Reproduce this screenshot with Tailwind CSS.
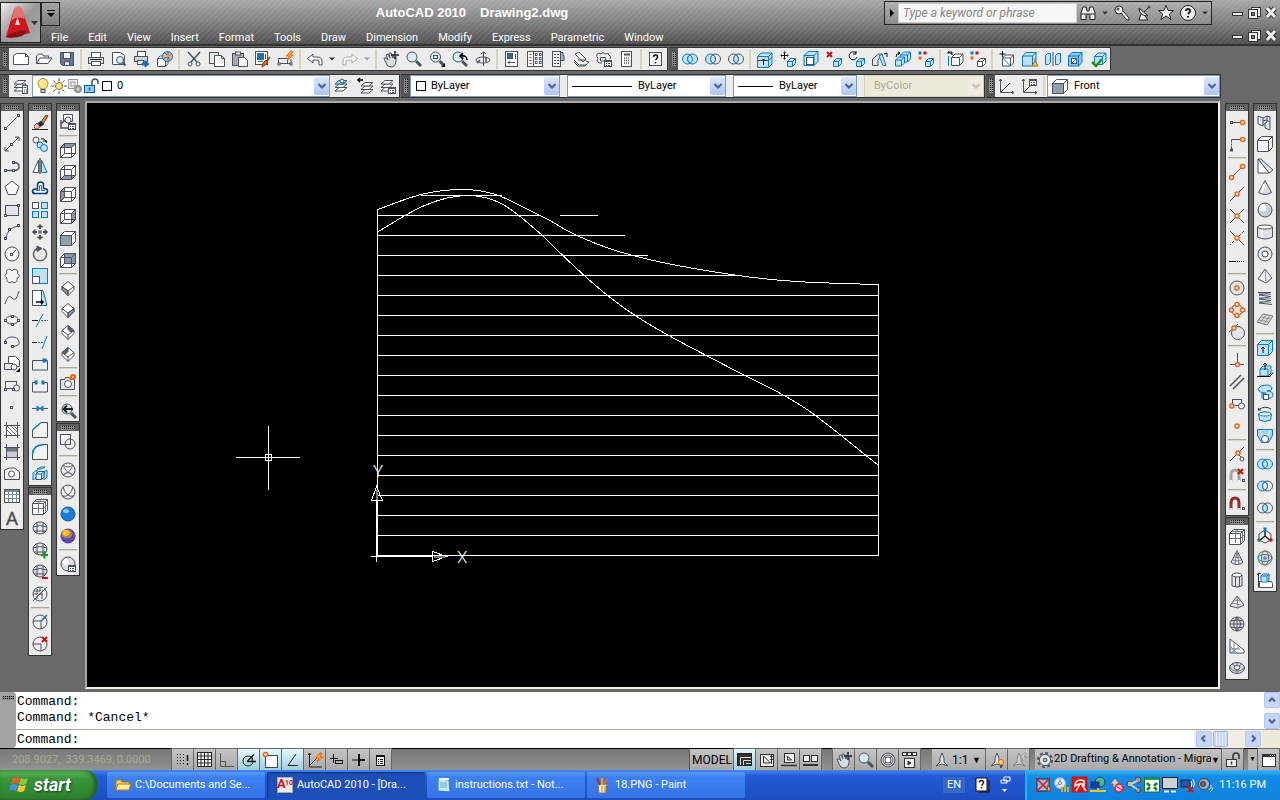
<!DOCTYPE html>
<html lang="en">
<head>
  <meta charset="UTF-8">
  <meta name="viewport" content="width=device-width, initial-scale=1.0">
  <title>AutoCAD 2010 - Drawing2.dwg</title>
  <script src="https://cdn.jsdelivr.net/npm/@tailwindcss/browser@4"></script>
</head>
<body class="h-screen flex flex-col overflow-hidden bg-[#696969] font-[Roboto,'Liberation_Sans',sans-serif] text-[11px] leading-4 text-black">

  <!-- Title bar and menus -->
  <header class="flex shrink-0 h-[46px] border-b-2 border-[#333] bg-[repeating-linear-gradient(135deg,#ffffff0c_0_2px,transparent_2px_4px),linear-gradient(#a8a8a8,#858585_45%,#505050)]">
    <button aria-label="Application menu" class="w-[41px] h-[41px] mt-0.5 flex items-center justify-center border border-[#222] bg-linear-to-br from-[#eee] via-[#999] to-[#aaa]">
      <svg class="w-9 h-10" viewBox="0 0 36 40">
        <path d="M3 34L11 6Q15 1 19 6L27 30L19 32L17 28L10 29L8 35Z" fill="#cf151d"/>
        <path d="M12 22L14.500 14L17 22Z" fill="#f6d5d0"/>
        <path d="M11 6Q15 1 19 6L22 16Q12 12 8 19Z" fill="#fff" opacity=".4"/>
        <path d="M3 34Q12 26 25 28L19 33Q10 36 3 34Z" fill="#8d0b10"/>
        <path d="M28 18h7l-3.500 4z" fill="#2b2f3a"/>
      </svg>
    </button>
    <div class="flex-1 flex flex-col">
      <div class="flex h-[26px]">
        <button aria-label="Quick access" class="w-[19px] h-[24px] mt-0.5 flex items-center justify-center border border-[#222]">
          <svg class="size-2" viewBox="0 0 8 8"><path d="M0 0h8v1H0zM0 3h8L4 7z"/></svg>
        </button>
        <h1 class="flex-1 flex items-center justify-center gap-3.5 font-['Liberation_Sans',sans-serif] text-[13px] font-bold text-white"><span>AutoCAD 2010</span><span>Drawing2.dwg</span></h1>
        <div class="flex items-center h-6 mt-px border border-[#222] bg-white/10">
          <button aria-label="Collapse search" class="w-[13px] flex justify-center"><svg class="w-1 h-2" viewBox="0 0 4 8"><path d="M0 0l4 4-4 4z"/></svg></button>
          <input aria-label="Search" placeholder="Type a keyword or phrase" class="w-[179px] h-5 px-1 border border-[#ccc] bg-[#f6f6f6] text-xs italic placeholder:text-[#888]">
          <div data-icons="find drop key satellite star help drop" data-size="info" class="flex items-center"></div>
        </div>
        <div data-icons="minimize restore close" data-size="win" class="flex items-center w-[68px] pl-4"></div>
      </div>
      <div class="flex h-[18px] pt-0.5 items-center">
        <nav class="flex-1 flex items-center gap-5 pl-2.5 pt-1 text-white">
          <a href="#">File</a><a href="#">Edit</a><a href="#">View</a><a href="#">Insert</a><a href="#">Format</a><a href="#">Tools</a><a href="#">Draw</a><a href="#">Dimension</a><a href="#">Modify</a><a href="#">Express</a><a href="#">Parametric</a><a href="#">Window</a>
        </nav>
        <div data-icons="minimize restore close" data-size="win" class="flex items-center w-[68px] pl-4"></div>
      </div>
    </div>
  </header>

  <!-- Standard and solid editing toolbars -->
  <div class="flex shrink-0 gap-px h-7 pt-px pb-[3px]">
    <div data-grip="h" data-icons="new open save | plot preview publish dwf | cut copy paste match block | undo drop redo dropoff | pan zoom zoomWindow zoomPrevious orbit | properties designCenter toolPalettes sheetSet markup calculator | helpBox" data-size="h" class="flex items-center border-y border-r border-[#333] bg-[#ececec]"></div>
    <div data-grip="h" data-icons="union subtract intersect | extrudeFace moveFace offsetFace deleteFace rotateFace taperFace copyFace colorFace | copyEdge colorEdge | imprint clean separate shell check" data-size="h" class="flex items-center border-y border-r border-[#333] bg-[#ececec]"></div>
  </div>

  <!-- Layers, properties and view toolbars -->
  <div class="flex shrink-0 gap-px h-[27px] pb-[3px]">
    <div data-grip="h" class="flex items-center border-y border-r border-[#333] bg-[#ececec]">
      <div data-icons="layers" data-size="h" class="flex"></div>
      <div class="flex items-center w-[298px] h-[22px] border border-[#7f9db9] bg-white">
        <div data-icons="bulb sun freeze unlock swatch" data-size="tiny" class="flex pl-0.5"></div>
        <select aria-label="Layer" class="flex-1 min-w-0 pl-0.5 appearance-none outline-0"><option>0</option></select>
        <span data-arrow></span>
      </div>
      <div data-icons="layerCurrent layerPrevious layerStates" data-size="h" class="flex"></div>
    </div>
    <div data-grip="h" class="flex items-center border-y border-r border-[#333] bg-[#ececec]">
      <div class="flex items-center gap-[7px]">
        <div class="flex items-center w-[150px] h-[22px] border border-[#7f9db9] bg-white">
          <div data-icons="swatch" data-size="tiny" class="flex pl-0.5"></div>
          <select aria-label="Color" class="flex-1 min-w-0 pl-0.5 appearance-none outline-0"><option>ByLayer</option></select>
          <span data-arrow></span>
        </div>
        <div class="flex items-center w-[159px] h-[22px] border border-[#7f9db9] bg-white">
          <i class="w-[60px] h-px ml-1 mr-1.5 bg-black"></i>
          <select aria-label="Linetype" class="flex-1 min-w-0 appearance-none outline-0"><option>ByLayer</option></select>
          <span data-arrow></span>
        </div>
        <div class="flex items-center w-[124px] h-[22px] border border-[#7f9db9] bg-white">
          <i class="w-[35px] h-px ml-1 mr-1.5 bg-black"></i>
          <select aria-label="Lineweight" class="flex-1 min-w-0 appearance-none outline-0"><option>ByLayer</option></select>
          <span data-arrow></span>
        </div>
        <div class="flex items-center w-[120px] h-[22px] border border-[#d5d2c0] bg-[#ece9d8] text-[#aca899]">
          <select aria-label="Plot style" disabled class="flex-1 min-w-0 pl-[9px] appearance-none"><option>ByColor</option></select>
          <span data-arrow="off"></span>
        </div>
      </div>
    </div>
    <div data-grip="h" class="flex items-center border-y border-r border-[#333] bg-[#ececec]">
      <div data-icons="ucs ucsNamed |" data-size="h" class="flex items-center"></div>
      <div class="flex items-center w-[173px] h-[22px] border border-[#7f9db9] bg-white">
        <div data-icons="viewFront" data-size="tiny" class="flex pl-1 pr-1.5"></div>
        <select aria-label="View" class="flex-1 min-w-0 appearance-none outline-0"><option>Front</option></select>
        <span data-arrow></span>
      </div>
    </div>
  </div>

  <!-- Workspace -->
  <main class="flex flex-1 min-h-0">
    <div class="flex gap-1 pt-0.5 mr-[5px] items-start">
      <div data-grip="v" data-icons="line xline polyline polygon rectangle arc circle revcloud spline ellipse ellipseArc insertBlock makeBlock point hatch gradient region table text" data-size="v" class="w-6 border border-[#333] bg-[#ececec]"></div>
      <div class="flex flex-col gap-px">
        <div data-grip="v" data-icons="erase copyObject mirror offset array move rotate scale stretch trim extend breakPoint breakLine join chamfer fillet explode" data-size="v" class="w-6 border border-[#333] bg-[#ececec]"></div>
        <div data-grip="v" data-icons="meshBox smooth smoothMore smoothLess refine - crease uncrease" data-size="v" class="w-6 border border-[#333] bg-[#ececec]"></div>
      </div>
      <div class="flex flex-col gap-px">
        <div data-grip="v" data-icons="namedViews - viewTop viewBottom viewLeft viewRight viewFront viewBack - viewSW viewSE viewNE viewNW - camera - previousView" data-size="v" class="w-6 border border-[#333] bg-[#ececec]"></div>
        <div data-grip="v" data-icons="wire2d - wire3d hidden realistic conceptual - visualStyles" data-size="v" class="w-6 border border-[#333] bg-[#ececec]"></div>
      </div>
    </div>

    <section aria-label="Drawing" class="flex-1 min-w-0 mb-[3px] border-2 border-t-[#aaa] border-l-[#a9a799] border-r-[#f4f2e4] border-b-[#f4f2e4] bg-black">
      <svg class="w-full h-full" viewBox="87 103 1131 584" fill="none" stroke="#fff" shape-rendering="crispEdges">
        <g id="strata"></g>
        <path d="M377.500 209V555.500H878.500V284"/>
        <path d="M377.500 209.500C400 202 422 189.500 463 189.500C498 189.500 515 204 540 215.500C555 222 560 228 578 236C600 246 615 251 633 255.500C665 264 700 270 735 275C780 282 820 283 878 284.500"/>
        <path d="M377.500 232C400 219 430 196 468 195.500C502 195.500 520 217 542 235C560 253 590 282 612 299C640 321 670 337 740 373C775 390 800 403 820 419C840 434 855 447 878 465"/>
        <!-- UCS icon -->
        <path d="M371 556.500H382M376.500 551V562"/>
        <path d="M377 556V500M377 556H432" stroke-width="2"/>
        <path d="M376.500 486.500L371.500 500.500H382.500ZM432.500 551.500V561.500L446.500 556.500Z"/>
        <path d="M376.500 490V500M434 556.500H445" stroke="#777" stroke-width="2"/>
        <g class="font-light text-[17px]" stroke="none" fill="#fff"><text x="457" y="563">X</text><text x="373" y="477">Y</text></g>
        <!-- Cursor -->
        <path d="M236 457.500H300M268.500 426V490M265.500 454.500h6v6h-6z"/>
      </svg>
    </section>

    <div class="flex gap-1 pt-0.5 ml-[5px] mr-[3px] items-start">
      <div class="flex flex-col gap-px">
        <div data-grip="v" data-icons="trackPoint snapFrom - endpoint midpoint intersection apparent extension - center quadrant tangent - perpendicular parallel insertSnap node - nearest snapNone - snapSettings" data-size="v" class="w-6 border border-[#333] bg-[#ececec]"></div>
        <div data-grip="v" data-icons="meshBox meshCone meshCylinder meshPyramid meshSphere meshWedge meshTorus" data-size="v" class="w-6 border border-[#333] bg-[#ececec]"></div>
      </div>
      <div data-grip="v" data-icons="polysolid box wedge cone sphere cylinder torus pyramid helix planar - extrude pressPull sweep revolve loft - union subtract intersect - move3d rotate3d align3d" data-size="v" class="w-6 border border-[#333] bg-[#ececec]"></div>
    </div>
  </main>

  <!-- Command window -->
  <section aria-label="Command line" class="flex shrink-0 h-14 bg-white font-['Liberation_Mono',monospace] text-[13px]">
    <div class="w-4 pt-1 pl-0.5 rounded-r bg-[#a3a3a3]"><i class="block w-3 h-1 bg-[conic-gradient(#111_25%,#888_0)] bg-size-[2px_2px]"></i></div>
    <div class="flex-1 flex flex-col">
      <div class="flex h-[38px] border-b border-[#aca899]">
        <div class="flex-1 pl-px pt-0.5"><p>Command:</p><p>Command:&nbsp;*Cancel*</p></div>
        <div class="flex flex-col justify-between w-4 bg-[#f4f4f0]">
          <button data-scroll="M1 5l3-3 3 3" aria-label="Scroll up"></button>
          <button data-scroll="M1 2l3 3 3-3" aria-label="Scroll down"></button>
        </div>
      </div>
      <div class="flex flex-1 items-center">
        <label for="command" class="pl-px pt-0.5">Command:</label>
        <input id="command" class="flex-1 min-w-0 pl-2 outline-0">
        <div class="flex items-center h-full pl-0.5 gap-px bg-[#f0eee4]">
          <button data-scroll="M5 0L2 3l3 3" aria-label="Scroll left"></button>
          <span class="w-[15px] h-4 rounded-xs border border-[#9cb4e8] bg-[repeating-linear-gradient(90deg,#c5d5fc_0_2px,#eef3ff_2px_3px)]"></span>
          <span class="w-[15px]"></span>
          <button data-scroll="M3 0l3 3-3 3" aria-label="Scroll right"></button>
          <span class="w-[18px] h-full bg-[#ece9d8]"></span>
        </div>
      </div>
    </div>
  </section>

  <!-- Status bar -->
  <footer class="flex shrink-0 items-stretch h-[22px] border-t border-black bg-linear-to-b from-[#787878] to-[#929292] text-xs">
    <output class="w-[172px] pl-3 pt-1 text-[11px] text-[#aaa694]">208.9027,&nbsp; 339.3469, 0.0000</output>
    <div data-icons="snap grid ortho polar* osnap* otrack* ducs dyn lwt qp" data-size="s" class="flex gap-px border-r border-[#555]"></div>
    <div class="flex-1"></div>
    <button class="w-[45px] border-l border-[#555] bg-linear-to-b from-[#c4c4c4] to-[#aaa]">MODEL</button>
    <div data-icons="model* layout quickLayout quickDrawings" data-size="s" class="flex gap-px"></div>
    <div class="w-3"></div>
    <div data-icons="pan zoom wheel motion" data-size="s" class="flex gap-px"></div>
    <div class="w-3"></div>
    <div class="flex items-center w-[53px] bg-linear-to-b from-[#c4c4c4] to-[#aaa]">
      <span data-icons="annotation" data-size="tiny" class="pl-0.5"></span>
      <select aria-label="Annotation scale" class="appearance-none w-[20px] ml-0.5 outline-0"><option>1:1</option></select><span class="text-[9px]">▼</span>
    </div>
    <div data-icons="annoVisible annoAuto" data-size="s" class="flex gap-px ml-px"></div>
    <div class="w-[6px]"></div>
    <div class="flex items-center w-[186px] bg-linear-to-b from-[#c4c4c4] to-[#aaa]">
      <span data-icons="gear" data-size="tiny" class="pl-0.5 pr-px"></span>
      <select aria-label="Workspace" class="appearance-none flex-1 min-w-0 text-[11px] outline-0"><option>2D Drafting &amp; Annotation - Migra</option></select><span class="w-2.5 text-[9px]">▼</span>
    </div>
    <div data-icons="lock" data-size="s" class="flex ml-px"></div>
    <button aria-label="Status menu" class="w-[9px] ml-[5px] text-[7px] bg-[#b8b8b8]">▼</button>
    <div data-icons="cleanScreen" data-size="s" class="flex ml-px pr-px bg-[#b8b8b8]"></div>
  </footer>

  <!-- Taskbar -->
  <div class="flex shrink-0 h-[30px] bg-linear-to-b from-[#4a87ee] via-[#2359d6] via-20% to-[#1d4ec0] text-white">
    <button class="flex items-center gap-1 w-[97px] pl-2.5 rounded-r-xl bg-linear-to-b from-[#5fb85b] via-[#38963a] via-30% to-[#2f8030] shadow-[inset_-3px_0_4px_#1f5f22] text-lg font-bold italic [text-shadow:1px_1px_2px_#1a3d1a]">
      <svg class="size-5" viewBox="0 0 20 20"><path d="M3 3q4-2 7 0L8 9Q5 7 1 9z" fill="#f0592b"/><path d="M11 3q3 2 7 0l-2 6q-4 2-7 0z" fill="#8cc83c"/><path d="M1 10q4-2 7 0l-2 6q-3-2-7 0z" fill="#3d8ff0"/><path d="M9 10q3 2 7 0l-2 6q-4 2-7 0z" fill="#fdc82e"/></svg>
      start
    </button>
    <div class="flex items-center gap-0.5 pl-2.5">
      <button class="flex items-center gap-1 w-[158px] h-[26px] pl-2 rounded-xs bg-linear-to-b from-[#5a9af8] via-[#3c81f3] via-20% to-[#3573e6]"><span data-icons="folder" data-size="plain"></span>C:\Documents and Se...</button>
      <button class="flex items-center gap-1 w-[158px] h-[26px] pl-2.5 rounded-xs bg-[#1c4fb8] shadow-[inset_1px_1px_2px_#0d327f]"><span data-icons="acad" data-size="plain"></span>AutoCAD 2010 - [Dra...</button>
      <button class="flex items-center gap-1 w-[158px] h-[26px] pl-2 rounded-xs bg-linear-to-b from-[#5a9af8] via-[#3c81f3] via-20% to-[#3573e6]"><span data-icons="notepad" data-size="plain"></span>instructions.txt - Not...</button>
      <button class="flex items-center gap-1 w-[158px] h-[26px] pl-2 rounded-xs bg-linear-to-b from-[#5a9af8] via-[#3c81f3] via-20% to-[#3573e6]"><span data-icons="paint" data-size="plain"></span>18.PNG - Paint</button>
    </div>
    <div class="flex-1"></div>
    <div class="flex items-center gap-2.5 pr-3">
      <button class="px-1 bg-[#316ac5]">EN</button>
      <span data-icons="langHelp langRestore" data-size="plain" class="flex gap-1.5"></span>
    </div>
    <div class="flex items-center w-[255px] pl-[9px] border-l-2 border-[#1bb8f5] bg-linear-to-b from-[#3fb4f6] via-[#118ee8] via-20% to-[#0f80db]">
      <div data-icons="trayBlocked trayDisc trayAvira trayNet trayEject trayShare trayExpand trayScreen trayWifi traySound" data-size="plain" class="flex gap-0.5 flex-1"></div>
      <time class="pr-3.5">11:16 PM</time>
    </div>
  </div>

  <script>
    const INK = '#4b525e', BLUE = '#0a78cc', SKY = '#bfe2f6', ORG = '#f2600c', RED = '#cc1111';
    const p = (d, s = INK, f = 'none', w = 1) => `<path d="${d}" stroke="${s}" fill="${f}" stroke-width="${w}"/>`;
    const c = (x, y, r, s = INK, f = 'none', w = 1) => `<circle cx="${x}" cy="${y}" r="${r}" stroke="${s}" fill="${f}" stroke-width="${w}"/>`;
    const e = (x, y, a, b, s = INK, f = 'none') => `<ellipse cx="${x}" cy="${y}" rx="${a}" ry="${b}" stroke="${s}" fill="${f}"/>`;
    const r = (x, y, w, h, s = INK, f = 'none') => `<rect x="${x}" y="${y}" width="${w}" height="${h}" stroke="${s}" fill="${f}"/>`;
    const cube = (x, y, n, d, s = INK, f = '#fff') => p(`M${x} ${y + d}l${d} ${-d}h${n}v${n}l${-d} ${d}h${-n}z`, s, f) + p(`M${x} ${y + d}h${n}v${n}M${x + n} ${y + d}l${d} ${-d}`, s);
    const dot = (x, y) => r(x - 1, y - 1, 2, 2, INK, '#fff');
    const osn = (x, y) => c(x, y, 2, ORG, '#fff', 1.5);
    const ball = (f = '#eee') => c(8, 8, 7, INK, f);
    const pal = (x, y) => r(x + .5, y + .5, 7, 6, INK, '#fff') + p(`M${x + .5} ${y + 1}h7`, INK, 'none', 2) + p(`M${x + 2} ${y + 3.5}h1m1 0h2M${x + 2} ${y + 5.5}h1m1 0h2`);
    const lay = (n = 3, s = INK) => { let o = ''; for (let i = n; i--;) o += p(`M1 ${6 + i * 3.5}l4-3.500h8l-4 3.500z`, s, '#fff'); return o; };
    const mov = (x, y) => p(`M${x - 4} ${y}h8M${x} ${y - 4}v8M${x - 3} ${y - 1}v2M${x + 3} ${y - 1}v2M${x - 1} ${y - 3}h2M${x - 1} ${y + 3}h2`, '#111');
    const cross = (x, y) => p(`M${x} ${y}l5 5m0-5l-5 5`, RED, 'none', 2);
    const dots = r(1, 1, 2, 2, BLUE, BLUE) + r(6, 1, 2, 2, RED, RED) + r(1, 6, 2, 2, ORG, ORG);
    const mag = (x, y) => c(x, y, 5, INK, '#d9ebf3') + p(`M${x + 4} ${y + 4}l5 5`, INK, 'none', 3);
    const iso = a => p('M8 1.500l6 5v3l-6 6-6-6v-3z', INK, '#fff') + a + p('M2 6.500l6 4.500 6-4.500M8 11v4.500');
    const frame = 'M.5 5.500l4-4h11v10l-4 4h-11z';
    const view = a => p(frame, INK, '#fff') + p(a, INK, '#8b95a3') + p('M.5 5.500h11v10M11.500 5.500l4-4M4.500 1.500v10h11M.5 15.500l4-4');
    const hand = p('M1 7q3-1 4 2l-2-5 2-1 2 4-1-5 2 0 2 5 1-4 2 1v7q-1 5-5 5-4 0-5-4z', INK, '#d7dce0');
    const compass = p('M8 1l2 5v4l4 4-6-2-6 2 4-4V6z', INK, '#e4e4e4');
    const globe = ball('#e3e5e8') + p('M1 8h14M2 5q6-2 12 0M2 11q6 2 12 0M8 1v14M8 1q-7 7 0 14M8 1q7 7 0 14');
    const face = (x, y) => cube(x + .5, y + .5, 5, 3, BLUE, SKY);
    const magnet = s => p('M2 14V7q0-5 4-5t4 5v7', s, 'none', 3) + p('M.5 13.500h3M8.500 13.500h3', '#eee', 'none', 3) + r(13.5, 11.500, 2, 2);
    const venn = (a, b, m) => c(5.5, 8, 5, a ? BLUE : INK, a ? SKY : 'none') + c(10.5, 8, 5, b ? BLUE : INK, b ? SKY : 'none') + (a && !b ? p('M8 3.800q-5 4 0 8.500 5-4 0-8.500z', BLUE, '#ececec') : '') + (m ? p('M8 3.800q-5 4 0 8.500 5-4 0-8.500z', BLUE, SKY) : '');

    const icons = {
      minimize: r(3.5, 7.500, 10, 3, '#333', '#eee'),
      restore: r(5.5, 2.500, 9, 9, '#333', '#eee') + r(2.5, 4.500, 9, 9, '#333', '#eee') + r(5.5, 7.500, 3, 3, '#333', '#777'),
      close: p('M4 3l8 9M12 3l-8 9', '#333', 'none', 5) + p('M4 3l8 9M12 3l-8 9', '#eee', 'none', 3),
      find: p('M1 14.500V8l2-6h3l1 4h2l1-4h3l2 6v6.500h-5V9H6v5.500z', '#222', '#eee') + p('M1 9h5M10 9h5', '#222'),
      drop: p('M5 6.500h6l-3 3z', 'none', '#333'),
      dropoff: p('M5 6.500h6l-3 3z', 'none', '#999'),
      key: c(5, 5, 4, '#222', '#eee') + p('M7 8l6 7h2v-2L9 6', '#222', '#eee') + c(4, 4, 1, '#222'),
      satellite: p('M3 3q0 8 9 8zM5 9l-2 6h9l-3-4M8 7l5-5', '#222', '#eee') + c(13, 2, 1, '#222', '#fff'),
      star: p('M8 .5l2.200 5h5.300l-4.200 3.500 1.700 5.500-5-3.500-5 3.500 1.700-5.500L.5 5.500h5.300z', '#222', '#eee'),
      help: c(8, 8, 7.5, '#222', '#eee') + p('M6 6q0-2 2-2t2 2q0 1-2 3M8 11v1.500', '#222', 'none', 2),
      new: p('M.5 13.500v-9l3-2h9l3 3v8z', INK, '#fff') + p('M12.500 2.500v3h3'),
      open: p('M.5 12.500V5l2-2h4l1 2h5v2', INK, '#eee') + p('M.5 12.500L4 7h12l-4 5.500z', INK, '#f4f6f8'),
      save: p('M1.500 1.500h13v13h-11l-2-2z', INK, '#68788c') + r(4.5, 1.5, 7, 6, INK, '#f2f4f6') + r(5.5, 10.5, 5, 4, INK, '#dde'),
      plot: r(3.5, 1.5, 9, 5, INK, '#fff') + r(.5, 6.500, 15, 6, INK, '#dcdfe3') + r(3.5, 10.5, 9, 4, INK, '#fff') + p('M2 8.500h12', '#222'),
      preview: p('M1.500 1.500h8l4 3v9h-12z', INK, '#fff') + c(9, 9, 3.5, INK, '#d9ebf3') + p('M11.500 11.500l3 3', INK, 'none', 2),
      publish: r(3.5, .5, 8, 5, INK, '#fff') + r(.5, 5.500, 13, 5, INK, '#cfd3d8') + r(3.5, 9.500, 6, 4, INK, '#fff') + p('M8 12h3V9.500l4 3.500-4 3v-2H8z', BLUE, '#1662b8'),
      dwf: cube(.5, 5, 8, 2.5) + c(10.5, 5.500, 5, '#1a6ac0', '#7ad2e8') + p('M8 2l3 3 3-1M7 7l4-1 2 3M11 1v9', '#e8401c') + p('M6.500 5h8', '#fbd22e'),
      cut: p('M2 1l9 10M14 1L5 11', INK, 'none', 1.5) + c(4, 13, 2) + c(12, 13, 2),
      copy: r(.5, 1.500, 9, 11, INK, '#e8ebee') + p('M5.500 4.500h7l3 3v8h-10z', INK, '#fff') + p('M12.500 4.500v3h3'),
      paste: r(.5, 2.500, 11, 12, INK, '#a7a9ac') + r(3.5, 1, 5, 3, INK, '#eee') + p('M6.500 6.500h6l3 3v6h-9z', INK, '#fff'),
      match: r(.5, .5, 12, 13, INK, '#fff') + r(2.5, 2.5, 6, 6, BLUE, '#1d6ba8') + p('M10.500 3v5M3 10.500h5') + p('M15 6l-4 5', '#8a5a2a', 'none', 2) + p('M11 9l2 3-6 4 1-4z', '#8c3a0c', '#d9702a'),
      block: p('M.5 7.500h9v5h-9zM4 12.500h9M13 8v5') + dot(1, 13) + dot(13, 13) + p('M13 0L8 5h3l-2 5 6-6h-3l3-3z', ORG, '#ffb02c'),
      undo: p('M6 3v3h4q5 0 5 4v4h-3v-3q0-2-2-2H6v3L.5 7.500z', INK, '#fff'),
      redo: p('M10 3v3H6Q1 6 1 10v4h3v-3q0-2 2-2h4v3l5.500-4.500z', '#a8a8a8', '#fff'),
      pan: hand + mov(12, 4),
      zoom: mag(6, 6),
      zoomWindow: mag(6.5, 6) + r(4.5, 4.500, 4, 3) + p('M16 12v4h-4z', 'none', '#000'),
      zoomPrevious: mag(6, 6) + p('M15 9q0-5-6-4M11 2L8 5l3 3', '#000', 'none', 1.5),
      orbit: p('M8.500 1v14M6 3l2.500-2L11 3') + e(8, 9, 7, 3) + p('M5 9l-3 3M11 6v5', INK, 'none', 1.5),
      properties: r(1.5, .5, 12, 15, INK, '#fff') + r(3.5, 2.5, 5, 5, INK, '#2d6ca0') + p('M11.500 3v5M6 9.500l-2 2 2 2M4 11.500h7', INK),
      designCenter: r(.5, .5, 15, 15, INK, '#fff') + p('M6.500 1v14M2.500 3.500h2M2.500 6.500h2M2.500 9.500h2M2.500 12.500h2') + [8.5, 12.5].map(x => r(x, 2.5, 1.5, 2) + r(x, 6.5, 1.5, 2) + r(x, 10.5, 1.5, 2)).join(''),
      toolPalettes: r(2.5, .5, 8, 15, INK, '#f6f6f6') + p('M4 3.500h2m1 0h2M4 6.500h2m1 0h2M4 9.500h2m1 0h2M4 12.500h2m1 0h2', INK) + p('M11 1.500h2v3h1v5h-3', INK, '#aab2bc'),
      sheetSet: p('M2 3l4-2 7 7-3 3zM1 9l5 5h7l3-3-3-1', INK, '#eceef0') + p('M3 4l7 7M1 11l4 4h7l3-3M5 9h8', INK),
      markup: p('M1 3q2-2 4 0 2-3 4 0 3-2 4 1 3 2 1 4M1 3q-1 3 1 4-2 3 1 5h3', INK, 'none', 1) + p('M4.500 6.500h5V10H4.500z') + pal(8, 9),
      calculator: r(2.5, .5, 10, 15, INK, '#fff') + p('M5 3.500h6', INK, 'none', 2) + p('M5 7h1m1 0h1m1 0h1M5 9.500h1m1 0h1m1 0h1M5 12h1m1 0h1m1 0h1', INK, 'none', 1.5),
      helpBox: r(1.5, 1.5, 12, 13, INK, '#f4f4f4') + p('M5.500 6q0-2 2-2t2 2q0 1-2 3M7.500 11v1.500', '#111', 'none', 1.5),
      union: venn(1, 1, 1), subtract: venn(1, 0, 0), intersect: venn(0, 0, 1),
      extrudeFace: cube(.5, 2, 11, 3.5, BLUE, SKY) + p('M.5 9.500h11l3.500-3') + p('M6.500 14V8M4.500 10l2-2 2 2', '#111'),
      moveFace: mov(4.5, 4.5) + face(7, 7),
      offsetFace: cube(1, .5, 10, 4, BLUE, SKY) + r(3.5, 6.500, 7, 7, INK, '#fff'),
      deleteFace: cross(1, 1) + face(7, 7),
      rotateFace: p('M7 2a4 4 0 1 0 1 4M7 0v3H4', '#111') + face(7, 7),
      taperFace: p('M.5 14.500V8l6-5h4L6 9v5.500z', INK, '#dfe3e8') + p('M7 5l4 9.500h3L10 3z', BLUE, SKY) + p('M15 6V2l-3 1', '#111'),
      copyFace: cube(5.5, 1, 7, 3, BLUE, SKY) + cube(.5, 6, 6, 3, BLUE, SKY) + p('M1 6q0-4 4-4L3 1M5 2L3 4', '#111'),
      colorFace: dots + face(7, 7),
      copyEdge: cube(4.5, 3, 8, 3.5) + p('M1.500 5v10', BLUE) + p('M1 1h4v3M5 3L1 1l0 2', '#111'),
      colorEdge: dots + cube(7.5, 7.5, 5, 3),
      imprint: cube(3.5, 4, 8, 3) + p('M3.500 7l8 8', BLUE) + p('M3.500 0v6M.5 3h6', '#111'),
      clean: cube(.5, 1.5, 10, 3.5, BLUE, SKY) + p('M13 7v3l-3 5h6l-3-5', '#b46b00', '#ffc933'),
      separate: p('M.5 4.500l2-2h3v9l-2 2h-3zM10.500 4.500l2-2h3v9l-2 2h-3z', BLUE, SKY) + p('M8 1v14', INK),
      shell: cube(.5, 1.5, 10, 3.5, BLUE, '#8fc8ec') + r(3.5, 7.500, 5, 5, INK, '#fff') + p('M8 8l-4 4', BLUE),
      check: cube(3.5, 2, 8, 3.5, BLUE, SKY) + p('M1 11l4 4 6-7', '#1a9412', 'none', 2.5),
      layers: lay() + r(9.500, 7.500, 5, 8, INK, '#fff') + p('M10.500 9.500h3', BLUE) + p('M11 12h1m1 0h1M11 14h1m1 0h1'),
      bulb: p('M6 11Q3 8 3 5.500a5 5 0 0 1 10 0Q13 8 10 11z', '#b58a1e', '#ffe88a') + r(6, 11.500, 4, 3, INK, '#ccc'),
      sun: c(8, 8, 3.5, '#8a6a10', '#ffe88a') + p('M8 0v3M8 13v3M0 8h3M13 8h3M2.500 2.500l2 2M11.500 11.500l2 2M2.500 13.500l2-2M11.500 4.500l2-2', '#555'),
      freeze: r(1.500, 1.500, 9, 9, '#999', '#eee') + r(4, 4, 4, 4, '#999') + c(11, 11, 3, '#999', '#ccc', 2.5),
      unlock: p('M9 8V4q0-3 3-3t3 3v2', INK, 'none', 1.500) + r(1.500, 7.500, 10, 7, '#0a5a9c', '#8ccdf2') + p('M6.500 9.500v3', INK, 'none', 1.5),
      swatch: r(3.5, 3.5, 9, 9, '#000', '#fff'),
      layerCurrent: lay(3) + p('M1 6l4-3.500h8l-4 3.500z', BLUE, SKY) + c(8, 3, 2, INK, '#eee'),
      layerPrevious: `<g transform="translate(3 2)">${lay(3)}</g>` + p('M6 2H1M3 0L1 2l2 2', '#000', 'none', 1.5),
      layerStates: lay(3) + pal(8, 9),
      ucs: p('M1.500 1v13.500H15M2 14L11 5M0 3l1.500-2L3 3M13 13l2 1.500-2 1.500'),
      ucsNamed: p('M1.500 1v13.500H15M2 14l6-6M0 3l1.500-2L3 3M13 13l2 1.500-2 1.500') + pal(7, 1),
      line: p('M2 14L14 2') + dot(1.5, 14.5) + dot(14.5, 1.5),
      xline: p('M1 15L15 1M1 11v4h4M11 1h4v4') + dot(7.5, 8.5),
      polyline: p('M1 12.500h9q5 0 5-4t-5-4', INK, 'none', 1.5) + dot(1.5, 12.5) + dot(9.5, 4.5) + dot(9.5, 12.5),
      polygon: p('M8 1l7 5.500-3 8H4l-3-8z', INK, '#f4f5f7'),
      rectangle: r(1.500, 3.500, 13, 10, INK, '#e2e4e8') + dot(1.5, 13.5) + dot(14.5, 3.5),
      arc: p('M2 14Q3 4 14 2') + dot(1.5, 14.5) + dot(5.5, 5.5) + dot(14.5, 1.5),
      circle: ball('#f4f5f7') + p('M8 8l4-4') + dot(7.5, 8.5),
      revcloud: p('M8 3c1-3 7-2 5.500 2.500C16.500 7 15 10 13 10c1.500 4-3 6-5 3.500C6 16 1.500 14 3 10 .5 9 .5 6 3 5.500 1 1 7 0 8 3z', INK, '#f2f3f5'),
      spline: p('M1 14Q4 3 8 8T15 1', INK, 'none', 1),
      ellipse: e(8, 8, 6.5, 4, INK, '#eee') + dot(1.5, 8.5) + dot(14.5, 8.5) + dot(8.5, 4.5) + dot(8.5, 12.5),
      ellipseArc: p('M1 8q1-5 7-5t7 4.500-6 5', INK, 'none', 1) + dot(8.5, 12.5) + dot(1.5, 8.5),
      insertBlock: p('M4.500 .5h7l4 4v6h-11z', INK, '#fff') + r(.5, 7.500, 8, 6, INK, '#eee') + c(10, 11, 3, INK, '#eee') + p('M16 12v4h-4z', 'none', '#000'),
      makeBlock: r(1.500, 3.500, 11, 7, INK, '#eee') + c(12.5, 10, 3, INK, '#eee') + dot(1.5, 11.5) + dot(9.5, 11.5),
      point: r(6.500, 6.500, 2, 2),
      hatch: r(2.500, 3.500, 11, 10, 'none', '#fff') + p('M0 3.500h16M0 13.500h16M2.500 0v16M13.500 0v16', INK) + p('M3 8l5 5M3 4l9 9M7 4l6 6M10 4l3 3', '#777'),
      gradient: r(2.500, 3.500, 11, 5, 'none', '#999') + r(2.500, 8.500, 11, 5, 'none', '#ccc') + p('M3 5.500h10', '#6b727c', 'none', 3) + p('M0 3.500h16M0 13.500h16M2.500 0v16M13.500 0v16'),
      region: p('M.5 13.500V4l5-2h5l5 4v7.500z', INK, '#f0f1f3') + c(7.5, 8, 3, INK, '#fff'),
      table: r(.5, 1.500, 15, 13, INK, '#fff') + p('M1 3h14', '#7d8794', 'none', 2) + p('M1 6.500h14M1 10.500h14M4.500 4v10M8.500 4v10M12.500 4v10', '#7d8794'),
      text: '<text x="8" y="15" text-anchor="middle" font-size="19" fill="#444b55" stroke="#444b55" stroke-width=".3">A</text>',
      erase: p('M9 8l5-7 2 1-5 8z', '#7a3a10', '#e08a42') + p('M5 10l4-3 3 3-4 3z', INK, '#222') + p('M2 12l3-3 3 4-3 2q-3 0-3-3z', '#9a5a4a', '#f5bba0') + p('M0 15.500h16', '#222'),
      copyObject: c(4, 4, 3) + c(8, 9, 3, BLUE, SKY) + c(12, 12, 3.5, BLUE, SKY) + p('M9 3q4-1 5 3M11 5h4l-1 2', '#111'),
      mirror: p('M6.500 2v12.500H1z', INK, '#fff') + p('M9.500 2v12.500H15z', BLUE, SKY) + p('M8 0v16', '#111'),
      offset: p('M.5 13.500h15M3.500 13.500q-3 0-3-2.500t5-2V5q0-3 3-3t3 3v3.500q4 0 4 2.500t-3 2.500', '#053a8c', '#fff', 1.500) + p('M4 10.500h3.500V5.500h2v5H13', BLUE),
      array: r(.5, .5, 6, 6, INK, '#fff') + r(9.5, .5, 6, 6, BLUE, SKY) + r(.5, 9.500, 6, 6, BLUE, SKY) + r(9.500, 9.500, 6, 6, BLUE, SKY),
      move: p('M8 1v4M8 11v4M1 8h4M11 8h4', INK, 'none', 2) + p('M5.500 3L8 .5 10.500 3zM5.500 13L8 15.500l2.500-2.500zM3 5.500L.5 8 3 10.500zM13 5.500L15.500 8 13 10.500z', INK, INK) + r(7, 7, 2, 2),
      rotate: p('M5 2.500A6.500 6.500 0 1 0 11 2.500', '#666', 'none', 1.500) + p('M5 0l5 2.500-5 3z', INK, INK),
      scale: r(.5, .5, 15, 15, BLUE, SKY) + r(.5, 8.500, 7, 7, INK, '#fff'),
      stretch: p('M6 .5h5l4 15H9', BLUE, SKY) + r(.5, .5, 9, 15, INK, '#fff') + p('M4 12h7M9 10l2 2-2 2', '#000', 'none', 1.500),
      trim: p('M0 8.500h6', '#222') + p('M4 15L11 2M9 8.500h2m1 0h2m1 0h1', BLUE),
      extend: p('M0 8.500h5', '#222') + p('M6 8.500h2m1 0h2M10 15l5-13', BLUE),
      breakPoint: p('M.5 14v-9.500h15V14z', INK, '#eef0f2') + r(11, 3, 3, 3, BLUE, BLUE),
      breakLine: p('M3.500 4.500h-3V14h15V4.500h-3', INK, '#eef0f2') + r(3, 3, 2, 3, BLUE, BLUE) + r(10, 3, 2, 3, BLUE, BLUE),
      join: p('M0 8.500h16', INK) + p('M5 6l3 2.500L5 11zM11 6L8 8.500l3 2.500z', BLUE, BLUE),
      chamfer: p('M.5 15.500v-8l7-7h8v15z', 'none', '#f2f3f5') + p('M.5 8v7.500h15V.5H9') + p('M.5 8L9 .5', BLUE, 'none', 1.5),
      fillet: p('M.5 15.500V9Q2 1 12 .5h3.500v15z', 'none', '#f2f3f5') + p('M.5 9v6.500h15V.5H12') + p('M.5 10Q1 1 12 .5', BLUE, 'none', 1.5),
      explode: p('M1 7l4-3v7l-4 3zM5 3l4-2h4L9 3zM12 6l3-2v7l-3 3z', BLUE, SKY) + cube(4, 5.5, 5.5, 2.5, '#0a5a9c', '#eaf5fc'),
      meshBox: cube(.5, 1.500, 11, 4) + p('M6.500 5v10M1 10.500h10.500l4-4M3 3.500h10.500v10M8.500 2l-2 3', '#6a727e'),
      smooth: e(8, 8, 7, 6, INK, '#e6e8eb') + p('M1 7q7-3 14 0M2 11h12M5 2.500v11M11 2.500v11'),
      smoothMore: e(8, 7, 7, 6, INK, '#e6e8eb') + p('M1 6q7-3 14 0M2 10h12M5 1.500v11M11 1.500v11') + p('M9 13h7M12.500 9.500v7', '#119a11', 'none', 2),
      smoothLess: e(8, 7, 7, 6, INK, '#e6e8eb') + p('M1 6q7-3 14 0M2 10h12M5 1.500v11M11 1.500v11') + p('M10 14h6', RED, 'none', 2),
      refine: ball() + p('M1 8h10M5 3v10M8 1v8M2 5h9M10 8v5') + p('M1 13L13 1', '#ececec') + p('M1 15L15 1'),
      crease: ball() + p('M1 7h8v8M9 7l5-4') + p('M9 7l6-6', BLUE, 'none', 1.500),
      uncrease: ball() + p('M1 8h8v7') + cross(10, 1),
      namedViews: p('M3.500 .5h9v7h-9z', INK, '#fff') + p('M1 6v8h7M1 10l4-4', INK, 'none', 1.500) + c(8, 6, 3, INK, '#eee') + pal(8, 9),
      viewTop: view('M.5 5.500l4-4h11l-4 4z'), viewBottom: view('M.5 15.500l4-4h11l-4 4z'),
      viewLeft: view('M.5 5.500l4-4v10l-4 4z'), viewRight: view('M11.500 5.500l4-4v10l-4 4z'),
      viewFront: p(frame, INK, '#fff') + r(.5, 5.500, 11, 10, INK, '#959eab') + p('M11.500 5.500l4-4'), viewBack: view('M4.500 1.500h11v10h-11z'),
      viewSW: iso(p('M2 6.500l6 4.500v4.500l-6-6z', INK, '#8b95a3')), viewSE: iso(p('M14 6.500l-6 4.500v4.500l6-6z', INK, '#8b95a3')),
      viewNE: iso(p('M8 1.500l6 5-3 2-3-3z', INK, '#59636f')), viewNW: iso(p('M8 1.500l-6 5 3 2 3-3z', INK, '#59636f')),
      camera: p('M.5 5.500h4l1-2h4l1 2h4v10h-14z', INK, '#dfe3e6') + c(8, 10, 3.5, INK, '#fff') + c(13, 3, 2, ORG, '#ffdf3a', 2),
      previousView: mag(7, 7) + p('M13 7H4M7 3.500L3.500 7 7 10.500', '#222', 'none', 2),
      wire2d: r(.5, .5, 10, 10, INK, '#f3f3f5') + c(10, 10, 5),
      wire3d: ball() + p('M3 3q3 8 10 10M13 3q-3 8-10 10M3 3q5 4 10 0M3 13q5-5 10 0', '#6a727e'),
      hidden: ball() + p('M3 3q1 5 5 8 4-3 5-8M2 12q4 1 6-1 2 2 6 1'),
      realistic: c(8, 8, 7, '#0e5aa8', '#1c7bd4') + e(6, 5, 3, 2, 'none', '#8dc6f2'),
      conceptual: c(8, 8, 7, '#4a3a9a', '#5747b8') + e(7, 6, 5.5, 4.5, 'none', '#b8784a') + e(6, 5, 3.5, 3, 'none', '#ffc21c'),
      visualStyles: ball('#ddd') + e(6, 6, 3, 3, 'none', '#fff') + pal(8, 9),
      trackPoint: p('M3 8.500h9') + r(1.500, 7.500, 2, 2) + osn(13.5, 8.5),
      snapFrom: p('M12 3.500H2.500v3m0 1v2m0 1v3') + r(1.500, 13, 2, 2) + osn(13.5, 3.5),
      endpoint: p('M3 13L13 3') + osn(2.5, 13.5) + osn(13.5, 2.5),
      midpoint: p('M1 15L15 1') + osn(8, 8),
      intersection: p('M1 1l14 14M15 1L1 15') + osn(8, 8),
      apparent: p('M1 1l14 14M15 1l-2 2m-1 1l-2 2M5 11l-2 2m-1 1l-1 1') + osn(8, 8),
      extension: p('M0 9.500h7M8 9.500h1m1 0h1m1 0h1m1 0h1', '#111'),
      center: ball('#e2e4e8') + osn(8, 8),
      quadrant: c(8, 8, 5.500, INK, '#e2e4e8') + osn(8, 2.5) + osn(8, 13.5) + osn(2.5, 8) + osn(13.5, 8),
      tangent: c(9, 9, 6.5, INK, '#e2e4e8') + p('M0 8l9-8') + osn(5, 4),
      perpendicular: p('M8.500 1v12M1 12.500h14') + osn(8.5, 12.5),
      parallel: p('M1 12L12 1M4 15L15 4', INK, 'none', 1.5),
      insertSnap: r(3.500, 3.500, 9, 6, INK, '#eee') + c(12.5, 10, 3, INK, '#eee') + osn(3, 10),
      node: osn(8, 8),
      nearest: p('M1 15L15 1M9 8l5 5') + osn(9, 7) + c(13, 13, 2, INK, '#fff'),
      snapNone: magnet('#a5a5a5') + cross(9, 1),
      snapSettings: magnet('#8f2e2e'),
      meshCone: p('M8 .5l6 12q-6 4-12 0z', INK, '#e6e8eb') + p('M5 7q3 1 6 0M4 10q4 2 8 0M8 1l-2 13M8 1l2 13', '#7a828e'),
      meshCylinder: p('M3 3v11q5 2 10 0V3', INK, '#e6e8eb') + e(8, 3, 5, 2, INK, '#fff') + p('M6.500 5v10M10.500 5v10'),
      meshPyramid: p('M8 2l7 9-6 3-8-2z', INK, '#eee') + p('M8 2l1 12M5 6l6 1M3 9l9 2', '#7a828e'),
      meshSphere: globe,
      meshWedge: p('M1 1l14 11v3H1z', INK, '#fff') + p('M1 8l7 7M5 5v10M1 11h10M10 9l-9 6', '#7a828e'),
      meshTorus: e(8, 8, 7.5, 5.5, INK, '#d8dbdf') + e(8, 7.5, 3, 2, INK, '#fff') + p('M8 3v2.500M8 10v3.500M1 7q1 4 7 4t7-4M3 4l3 2M13 4l-3 2', '#6a727e'),
      polysolid: p('M1 2l5 2v8l-5-2zM6 4l4-2v6l-4 3M6 7l3-1 4 2v8l-5-2V9', INK, '#dfe4e8') + p('M10 2l3 1v5', INK),
      box: cube(.5, .5, 11, 4, INK, '#f1f2f4'),
      wedge: p('M4 1l12 11-4 3-11-14z', INK, '#dfe2e6') + p('M1 1v14h11z', INK, '#fff'),
      cone: p('M8 .5l6.500 12q-6.500 4-13 0z', INK, '#d8dbdf') + p('M7 4L5 12', '#fff', 'none', 2),
      sphere: ball('#c9ced5') + c(6, 6, 3.5, 'none', '#f4f6f8'),
      cylinder: p('M.5 3v10q7.500 4 15 0V3', INK, '#dde0e4') + e(8, 3, 7.500, 2, INK, '#fff') + p('M5 6v8', '#fff', 'none', 2),
      torus: ball('#d8dbdf') + c(8, 8, 5, '#fff') + c(8, 8, 3, INK, '#fff'),
      pyramid: p('M8 1l7 9-6 5-8-4z', INK, '#eceef1') + p('M8 1l1 14', '#8a929c'),
      helix: p('M1 2.500h13L2 5l12 1.500L2 9l12 1.500L2 13l13 1.500', INK, 'none', 1) + p('M2 3.500l12 1M2 7.500l12 1M2 11.500l12 1', '#8a929c'),
      planar: p('M6 2l10 2-6 9L0 10z', '#777', '#d5d8dc') + p('M4 5l10 2M2 8l10 2M9 3l-6 8M13 3l-6 9', '#999'),
      extrude: cube(.5, .5, 11, 4, BLUE, SKY) + p('M6 13V7M4 9l2-2 2 2', '#111'),
      pressPull: p('M3 7l3-3h8v7l-3 3H3z', BLUE, SKY) + p('M11 7v7M3 7h8', BLUE) + p('M0 14.500h13l3-4M8 8V1M6 3l2-2 2 2', '#111'),
      sweep: p('M1 5q2-4 8-4t6 4q-1 2-5 2 6 0 6 4t-6 3H5V9q3 1 4 0-7 0-8-4z', BLUE, SKY) + r(6.5, 10.5, 5, 5, INK, '#fff'),
      revolve: p('M1.500 8q6-4 13 0l-1 6q-6 3-11 0z', BLUE, SKY) + e(8, 8, 6, 2, BLUE, '#fff') + p('M1 4q7-5 13-1M2 2L1 4h3', '#333'),
      loft: p('M.5 1.500h15v6l-4 7h-7l-4-7z', BLUE, '#9fd3f2') + p('M3 3l3 8M13 3l-3 8', '#fff') + c(8, 11, 3.500, INK, '#fff'),
      move3d: p('M8 8V2M8 8l-6 5M8 8l6 5', '#222', 'none', 1.500) + p('M8 2l6 4v6l-6 3-6-3V6z', INK) + r(7, 0, 2, 3, BLUE, BLUE) + r(1, 11, 2, 2, '#14852e', '#14852e') + r(13, 11, 2, 2, RED, RED),
      rotate3d: c(8, 8, 7, '#249a46') + e(8, 8, 3.5, 7, '#d33', '#dce9f3') + e(8, 8, 7, 3.5, '#2477c8') + r(7, 7, 2, 2, BLUE, '#fff'),
      align3d: p('M1.500 1v14.500M0 3l1.500-2L4 2', '#333') + p('M2.500 9.500h12l1 2v4h-13z', INK, '#fff') + cube(4, 2, 6, 2, BLUE, SKY),
      snap: [2, 5, 8, 11].map(y => p(`M2 ${y + .5}h1m2 0h1m2 0h1`, '#111')).join('') + p('M12.500 3v6m0 2v2', '#111', 'none', 1.5),
      grid: r(.5, .5, 14, 14, '#222', '#fff') + p('M4 1v14M7.500 1v14M11 1v14M1 4h14M1 7.500h14M1 11h14', '#222'),
      ortho: p('M1.500 1v13.500H15M1.500 9.500h5v5', '#555', 'none', 1),
      polar: c(7, 9, 5, '#222') + p('M6 9.500h9M6 9.500l7-7', '#222', 'none', 1.5) + p('M11 4v5', '#222'),
      osnap: r(2.5, 3.500, 12, 12, '#444', '#fff') + osn(2.5, 2.5),
      otrack: p('M11 2L3 13.500h10', '#222', 'none', 1),
      ducs: p('M2.500 1v14H15M2 14L12 4M1 3l1.500-2L4 3', '#222') + p('M13 1L9 6h3l-2 4 6-5h-3l2-4z', ORG, '#ffb02c'),
      dyn: p('M1 6.500h8M4.500 2v9', '#111', 'none', 1) + r(6.500, 8.500, 7, 3, '#111'),
      lwt: p('M1 8h7', '#111') + p('M8 8h6', '#111', 'none', 2) + p('M8 2v12', '#111', 'none', 2),
      qp: r(3.5, 3.5, 8, 10, '#111', '#eee') + p('M3 4h9', '#111', 'none', 2) + p('M5 7.500h1m1 0h3M5 9.500h1m1 0h3M5 11.500h1m1 0h3', '#111'),
      model: r(.5, 1.5, 14, 12, '#222', '#333') + p('M3.500 13V5.500H14M6.500 13V8.500H14M9 11.500h5', '#ddd'),
      layout: r(1.5, 2.5, 13, 12, '#333', '#eee') + p('M4.500 4v7h7zM11 4.500h3M11 7.500h3M12.500 3v9', '#333'),
      quickLayout: r(3.5, 1.5, 10, 9, '#333', '#eee') + p('M6.500 4v4h4z', '#333') + p('M0 13.500h16', '#333', 'none', 1.5),
      quickDrawings: r(.5, 3.5, 6, 6, '#333', '#eee') + r(8.5, 3.5, 6, 6, '#333', '#eee') + p('M0 13h15', '#333', 'none', 2),
      wheel: ball('#e4e4e4') + c(8, 8, 3, INK, '#fff') + p('M3 3l3 3M13 3l-3 3M3 13l3-3M13 13l-3-3') + c(8, 8, 5),
      motion: r(.5, .5, 4, 3, '#333', '#eee') + r(5.5, .5, 4, 3, '#333', '#eee') + r(10.5, .5, 4, 3, '#333', '#eee') + r(2.500, 6.500, 10, 9, '#333', '#eee') + p('M6 9l3 2-3 2z', '#333', '#333'),
      annotation: compass,
      annoVisible: compass + c(12, 10, 2.5, ORG, '#ffe06a') + p('M12 13v3', '#555', 'none', 2),
      annoAuto: '<g opacity=".5">' + compass + p('M13 1L9 6h3l-2 4 6-5h-3l2-4z', '#777', '#eee') + '</g>',
      gear: c(8, 8, 5.5, INK, '#eee') + '<circle cx="8" cy="8" r="7" stroke="#4b525e" stroke-width="2" stroke-dasharray="3 2.500" fill="none"/>' + c(8, 8, 2, INK, '#bbb'),
      lock: p('M8 8V4q0-3 3-3t3 3v3', '#333', 'none', 1.500) + r(1.500, 7.500, 10, 7, '#333', '#eee') + p('M6.500 9.500v3', '#333', 'none', 1.5),
      cleanScreen: r(1.5, 2.5, 13, 12, '#333', '#fff') + p('M1 3.500h14', '#333', 'none', 3) + p('M9 3.500h1m1 0h1m1 0h1', '#fff'),
      folder: p('M1 13V3h5l1 2h7v8z', '#a87c18', '#f8d568') + p('M1 13l2-6h13l-2 6z', '#a87c18', '#ffeb9c'),
      acad: r(.5, .5, 15, 15, '#aaa', '#eee') + '<text x="0" y="11" font-size="13" font-weight="bold" fill="#d4141c">A</text><text x="8" y="8" font-size="7" font-weight="bold" fill="#d4141c">10</text>',
      notepad: p('M3 2l11 1 1 12-12-1z', '#3a7ab0', '#bfe9f8') + p('M4 2h10', '#eee', 'none', 2) + p('M5 6h7M5 8h7M5 10h7', '#69aed0'),
      paint: p('M3 7h9l-1 9H4z', '#866', '#f4f0ea') + p('M5 8L2 1', '#b03030', 'none', 2) + p('M7 8V1', '#e8a020', 'none', 2) + p('M9 8l3-6', '#d8662a', 'none', 2) + p('M7 9v6', '#f0c020', 'none', 2) + p('M10 9v6', '#3a9a4a'),
      langHelp: r(1, 1, 11, 13, '#111', '#fffbe0') + p('M14 3v12H4', '#111', 'none', 1) + p('M4.500 5.500q0-2 2-2t2 2q0 1-2 3M6.500 10v1.500', '#1a1a7a', 'none', 1.5),
      langRestore: p('M7 0h6v4H7zM4 3h6v3H4z', '#fff') + p('M5 12h5l-2.500 3z', 'none', '#fff'),
      trayBlocked: r(1, 2, 12, 12, '#223', '#a8b8dc') + p('M0 1l14 14M14 1L0 15', '#e01818', 'none', 1.5) + p('M11 8l4 4-3 3z', '#853', '#e8a060'),
      trayDisc: c(6, 6, 5.5, '#9ab', '#d8eef4') + c(6, 6, 1.5, '#678', '#fff') + p('M6 0v4M1 9l4-2', '#d6a', 'none', 1) + p('M8 10v5M11 8v7M14 10v5', '#d8a838', 'none', 2),
      trayAvira: r(0, 0, 15, 15, RED, '#d81818') + p('M3 9Q3 3 9 3l3 1v4q-3-3-9 1z', '#fff', 'none', 1.5) + p('M8 7l-4 7M10 8l4 6', '#fff', 'none', 1.5),
      trayNet: c(10, 5, 5, '#147', '#4ab88a') + r(1, 5, 8, 6, '#235', '#1b3ab0') + p('M0 14h16M8 11v3', '#e8c830', 'none', 2),
      trayEject: p('M7 1L2 7h3v4h4V7h3z', '#667', '#ccd') + c(11, 11, 4, '#d22', '#fbd', 1.5) + p('M8 9l6 4', '#d22'),
      trayShare: c(12, 3, 3, '#444', '#999') + c(4, 7, 3, '#444', '#bbb') + c(12, 13, 2.5, '#444', '#999') + p('M5 7l6-3M5 8l6 4', '#ccc', 'none', 2),
      trayExpand: r(.5, 1, 15, 14, '#176a26', '#fff') + p('M1 2h14', '#2a9a3a', 'none', 2) + p('M3 6l3 3M13 6l-3 3M3 13l3-3M13 13l-3-3', '#148224', 'none', 2.500),
      trayScreen: r(.5, .5, 15, 11, '#222', '#ccd2d8') + p('M2 14.500h5M9 14.500h5', '#eee', 'none', 2),
      trayWifi: r(1, 3, 9, 7, '#222', '#3550a8') + p('M11 4q2 3 0 6M13 2q3 5 0 9', '#fff') + cross(8, 10),
      traySound: c(6, 7, 5.5, '#444', '#aab') + c(5, 7, 2.5, '#333', '#667') + p('M13 8q1 3-2 5M15 10q0 3-3 5', '#cde')
    };

    const sizes = {
      h: 'w-[23px] h-[22px] shrink-0 flex items-center justify-center',
      v: 'w-full h-[22px] flex items-center justify-center',
      s: 'w-[21px] h-full flex items-center justify-center bg-linear-to-b from-[#c4c4c4] to-[#aaa] outline outline-[#666]',
      info: 'w-[22px] h-5 flex items-center justify-center',
      win: 'w-[17px] h-4 flex items-center justify-center',
      tiny: 'w-4 h-4 flex items-center justify-center',
      plain: 'w-4 h-4 flex items-center justify-center'
    };
    const glyph = name => `<svg class="size-4 overflow-visible" viewBox="0 0 16 16">${icons[name]}</svg>`;

    document.querySelectorAll('[data-icons]').forEach(el => {
      const size = el.dataset.size;
      el.innerHTML = el.dataset.icons.split(' ').map(key => {
        if (key === '|') return '<i class="w-0.5 h-5 mx-0.5 bg-[#d8d4bc]"></i>';
        if (key === '-') return '<i class="block h-0.5 my-0.5 mx-0.5 border-t border-[#a9a799] bg-[#d8d6cc]"></i>';
        const name = key.replace('*', '');
        // icons inside a field or a task button are decoration, not controls
        if (size === 'plain' || size === 'tiny') return `<span class="${sizes[size]}">${glyph(name)}</span>`;
        let cls = sizes[size];
        if (key.endsWith('*')) cls = 'w-[21px] h-full flex items-center justify-center bg-linear-to-b from-[#e6f6fa] to-[#9fcfdd] outline outline-[#666]';
        if (name.startsWith('drop')) cls = 'w-3 h-5 flex items-center justify-center';
        return `<button aria-label="${name}" class="${cls}">${glyph(name)}</button>`;
      }).join('');
    });

    document.querySelectorAll('[data-grip]').forEach(el => {
      el.insertAdjacentHTML('afterbegin', el.dataset.grip === 'h'
        ? '<i class="w-[9px] h-full shrink-0 flex items-center justify-center bg-[#555]"><b class="w-1 h-3.5 bg-[conic-gradient(#111_25%,#8a8a8a_0)] bg-size-[2px_2px]"></b></i>'
        : '<i class="flex h-[7px] items-center justify-center bg-[#606060]"><b class="w-3.5 h-1 bg-[conic-gradient(#111_25%,#8a8a8a_0)] bg-size-[2px_2px]"></b></i>');
    });

    document.querySelectorAll('[data-arrow]').forEach(el => {
      const off = el.dataset.arrow === 'off';
      el.className = off
        ? 'w-[15px] h-[18px] flex items-center justify-center bg-[#eeecdf] pointer-events-none'
        : 'w-[15px] h-[18px] flex items-center justify-center rounded-xs bg-linear-to-b from-[#dbe6ff] to-[#b0c6f6] pointer-events-none';
      el.innerHTML = `<svg class="w-2 h-2" viewBox="0 0 8 8"><path d="M0.500 2l3.500 3.500L7.500 2" fill="none" stroke="${off ? '#c5c2b4' : '#4d6185'}" stroke-width="2"/></svg>`;
    });

    document.querySelectorAll('[data-scroll]').forEach(el => {
      el.className = 'size-4 flex items-center justify-center rounded-xs border border-[#b4c8f2] bg-[#c5d5fc]';
      el.innerHTML = `<svg class="size-2" viewBox="0 0 8 7"><path d="${el.dataset.scroll}" fill="none" stroke="#4d6185" stroke-width="2"/></svg>`;
    });

    // Contour levels, one every 20 units
    const spans = [[195, 421, 502], [215, 377, 540], [215, 560, 598], [235, 377, 625], [255, 377, 648], [275, 377, 735]];
    for (let y = 295; y < 555; y += 20) spans.push([y, 377, 878]);
    document.getElementById('strata').innerHTML = spans.map(([y, a, b]) => `<path d="M${a} ${y}.5H${b}"/>`).join('');
  </script>
</body>
</html>
